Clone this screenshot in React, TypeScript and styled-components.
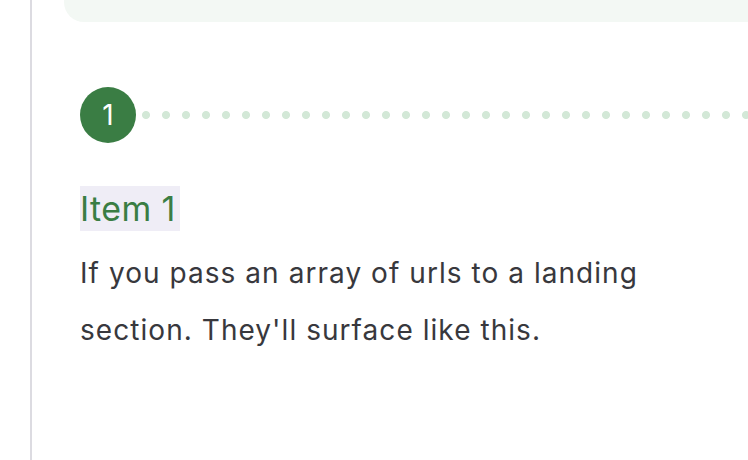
import React from "react";
import styled, { createGlobalStyle } from "styled-components";

const Global = createGlobalStyle`
  html, body { margin: 0; padding: 0; background: #ffffff; }
  body { font-family: Inter, "Noto Sans", "Liberation Sans", sans-serif; }
`;

const Page = styled.div`
  display: flex;
  width: 748px;
  height: 460px;
  overflow: hidden;
  background: #ffffff;
`;

const Rail = styled.div`
  width: 30px;
  flex: none;
  border-right: 2px solid #dcdbe1;
`;

const Main = styled.div`
  flex: 1;
  min-width: 0;
  display: flex;
  flex-direction: column;
`;

const PrevCard = styled.div`
  height: 22px;
  margin-left: 32px;
  margin-right: -40px;
  background: #f3f8f4;
  border-radius: 0 0 0 20px;
`;

const Step = styled.section`
  padding: 65px 0 0 48px;
  display: flex;
  flex-direction: column;
`;

const StepHeader = styled.div`
  display: flex;
  align-items: center;
  height: 56px;
`;

const Badge = styled.div`
  width: 56px;
  height: 56px;
  flex: none;
  border-radius: 50%;
  background: #3a7d44;
  color: #ffffff;
  display: flex;
  align-items: center;
  justify-content: center;
  font-size: 28px;
  font-weight: 400;
`;

const Dots = styled.div`
  flex: 1;
  height: 8px;
  margin-top: -1px;
  background-image: radial-gradient(circle, #d3e8d7 3.6px, transparent 4.4px);
  background-size: 20px 8px;
  background-repeat: repeat-x;
`;

const Title = styled.h3`
  align-self: flex-start;
  margin: 43px 0 0 0;
  padding: 0 4px 0 0;
  height: 45px;
  line-height: 45px;
  background: #efedf6;
  color: #3a7d44;
  font-size: 34px;
  letter-spacing: 0.4px;
  font-weight: 400;
`;

const Body = styled.p`
  margin: 14px 0 0 0;
  width: 620px;
  color: #38383d;
  font-size: 28px;
  letter-spacing: 1.05px;
  line-height: 57px;
`;

export default function App() {
  return (
    <Page>
      <Global />
      <Rail />
      <Main>
        <PrevCard />
        <Step>
          <StepHeader>
            <Badge>1</Badge>
            <Dots />
          </StepHeader>
          <Title>Item 1</Title>
          <Body>
            If you pass an array of urls to a landing section. They'll surface like this.
          </Body>
        </Step>
      </Main>
    </Page>
  );
}
